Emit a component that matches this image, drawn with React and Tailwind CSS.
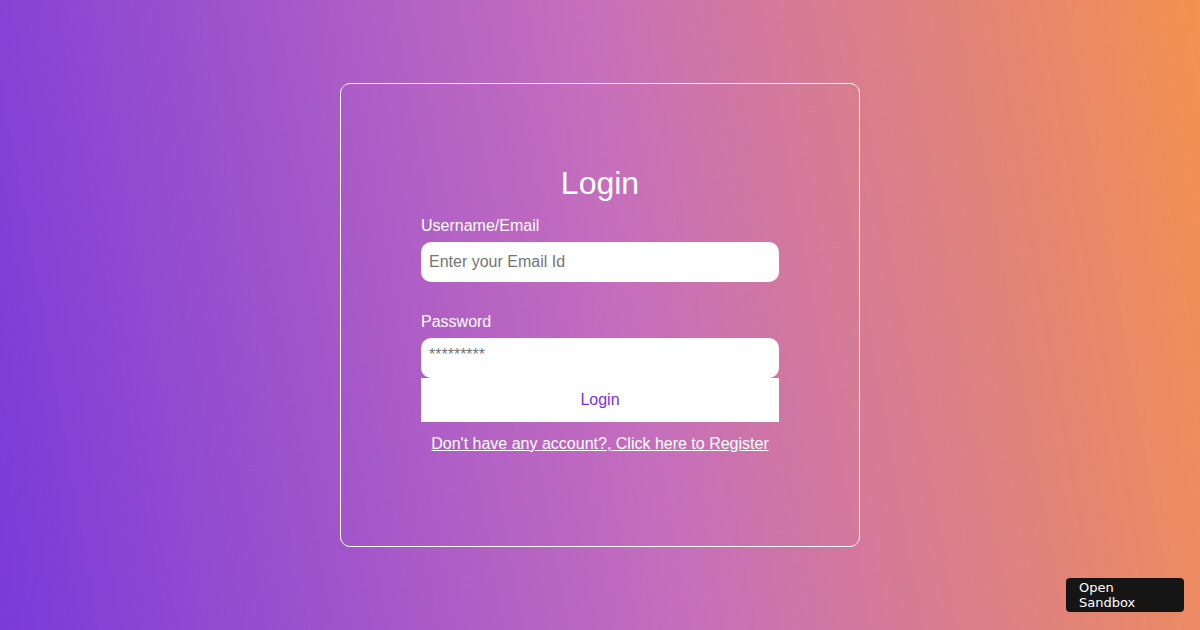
export default function App() {
  return (
    <div className="relative w-full h-[630px] flex items-center justify-center bg-[linear-gradient(80deg,#7a3ad9_0%,#c56ebd_52%,#f4914f_100%)] font-['Liberation_Sans',Arial,sans-serif]">
      <div className="w-[520px] h-[464px] border border-white rounded-[10px] flex flex-col items-center pt-[81px]">
        <h1 className="text-[32px] leading-[37px] text-white">Login</h1>

        <form className="w-[358px] flex flex-col mt-[14px]">
          <label className="text-white text-[16px] leading-[20px]">Username/Email</label>
          <input
            type="text"
            placeholder="Enter your Email Id"
            className="mt-[6px] h-[40px] rounded-[10px] bg-white px-[8px] text-[16px] text-gray-800 placeholder:text-[#757575] outline-none"
          />

          <label className="mt-[30px] text-white text-[16px] leading-[20px]">Password</label>
          <input
            type="password"
            placeholder="*********"
            className="mt-[6px] h-[40px] rounded-[10px] bg-white pl-[8px] pt-[7px] pb-[13px] text-[16px] leading-[20px] placeholder:text-[#757575] outline-none"
          />

          <button type="button" className="h-[44px] bg-white text-[16px] text-[#7b2fe0]">
            Login
          </button>

          <a href="#" className="mt-[12px] text-center text-white text-[16px] leading-[20px] underline">
            Don't have any account?, Click here to Register
          </a>
        </form>
      </div>

      <div className="absolute right-[16px] bottom-[18px] w-[118px] h-[34px] rounded-[4px] bg-[#151515] px-[13px] pt-[2px] font-['DejaVu_Sans',sans-serif] text-[13px] leading-[15px] text-white">
        <span className="block">Open</span>
        <span className="block">Sandbox</span>
      </div>
    </div>
  )
}
